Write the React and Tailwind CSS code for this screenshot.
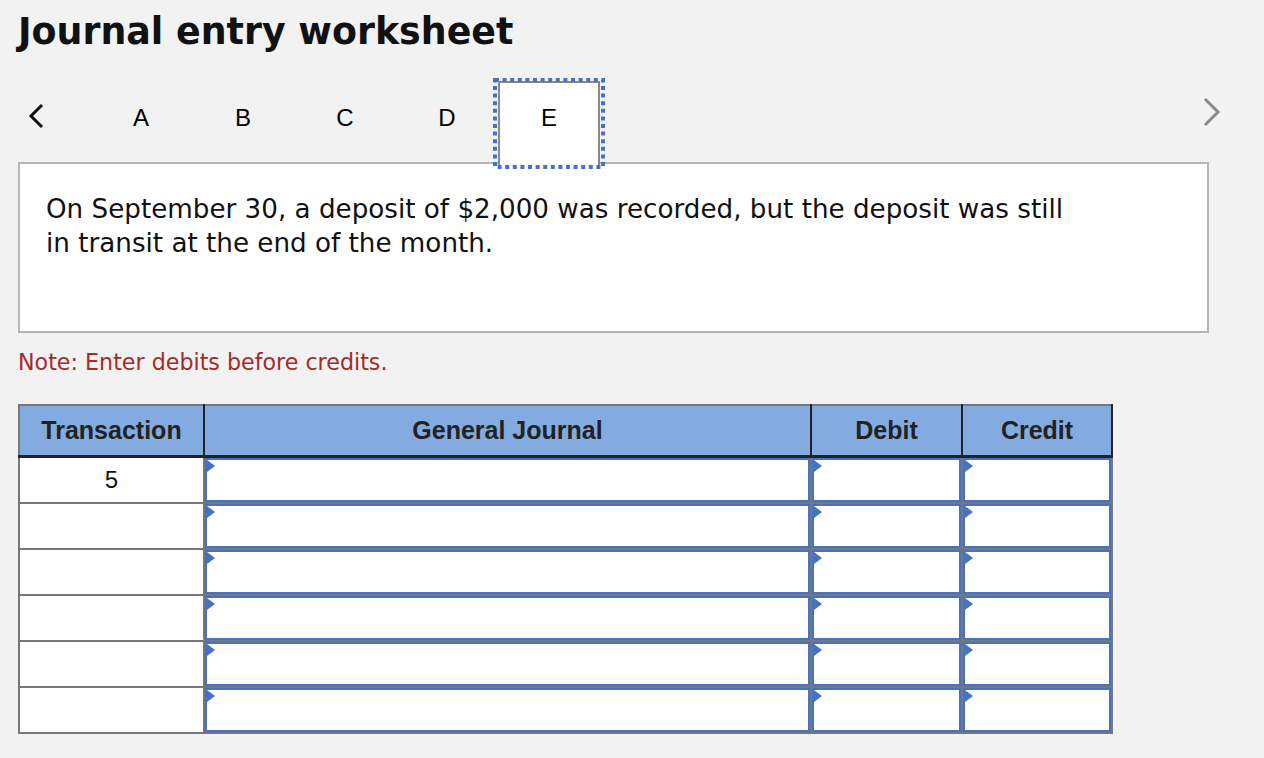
import React from "react";

const tabs = ["A", "B", "C", "D", "E"];

function Triangle() {
  return (
    <span className="absolute left-0 top-0 w-0 h-0 border-y-[6px] border-y-transparent border-l-[8px] border-l-[#4472c4]" />
  );
}

function InputCell() {
  return (
    <td className="p-0 border-2 border-[#777] bg-white h-[46px]">
      <div className="relative h-[44px] border-2 border-[#4472c4] bg-white">
        <Triangle />
      </div>
    </td>
  );
}

export default function App() {
  return (
    <div
      className="min-h-[758px] w-[1264px] bg-[#f2f2f2] text-black overflow-hidden"
      style={{ fontFamily: '"DejaVu Sans", Verdana, sans-serif' }}
    >
      <h1 className="pl-[18px] pt-[14px] text-[36.4px] leading-none font-bold text-[#111]">
        Journal entry worksheet
      </h1>

      <div
        className="mt-[31px] h-[82px] flex items-start pl-[18px]"
        style={{ fontFamily: '"Liberation Sans", Arial, sans-serif' }}
      >
        <div className="w-[72px] h-full flex items-start">
          <svg className="ml-[9px] mt-[21px]" width="18" height="28" viewBox="0 0 18 28">
            <polyline points="15,3 4,14 15,25" fill="none" stroke="#111" strokeWidth="3" strokeLinecap="butt" strokeLinejoin="miter" />
          </svg>
        </div>
        {tabs.map((t) => {
          const sel = t === "E";
          return sel ? (
            <div key={t} className="relative z-10 w-[102px] h-[84px] bg-white border-2 border-b-0 border-[#888] flex justify-center pt-[21px] text-[24px] leading-[28px] text-black">
              {t}
              <svg className="absolute -left-[7px] -top-[5px]" width="112" height="92" viewBox="0 0 112 92">
                <rect x="2" y="2" width="108" height="87" fill="none" stroke="#4472c4" strokeWidth="4" strokeDasharray="4 3.6" />
              </svg>
            </div>
          ) : (
            <div key={t} className="w-[102px] h-full flex justify-center pt-[23px] text-[24px] leading-[28px] text-black">
              {t}
            </div>
          );
        })}
        <div className="ml-auto mr-[41px] mt-[15px]">
          <svg width="22" height="32" viewBox="0 0 22 32">
            <polyline points="4,3 17,16 4,29" fill="none" stroke="#8a8a8a" strokeWidth="3" />
          </svg>
        </div>
      </div>

      <div className="relative -mt-[1px] ml-[18px] w-[1191px] h-[171px] border-2 border-[#b5b5b5] bg-white pl-[26px] pt-[28px] text-[26.2px] leading-[34px] text-[#111]">
        On September 30, a deposit of $2,000 was recorded, but the deposit was still
        <br />
        in transit at the end of the month.
      </div>

      <p className="ml-[18px] mt-[15px] text-[22.2px] leading-[28px] text-[#a52a2a]">
        Note: Enter debits before credits.
      </p>

      <table
        className="ml-[18px] mt-[28px] w-[1093px] table-fixed border-collapse border-2 border-[#777]"
        style={{ fontFamily: '"Liberation Sans", Arial, sans-serif' }}
      >
        <colgroup>
          <col className="w-[185px]" />
          <col className="w-[607px]" />
          <col className="w-[151px]" />
          <col className="w-[150px]" />
        </colgroup>
        <thead>
          <tr>
            {["Transaction", "General Journal", "Debit", "Credit"].map((h, i) => (
              <th
                key={h}
                className={`h-[51px] p-0 bg-[#83abe0] border-2 border-[#222] border-t-[#777] border-b-[3px] text-[25px] font-bold text-[#222] text-center ${i === 0 ? "border-l-[#777]" : ""}`}
              >
                {h}
              </th>
            ))}
          </tr>
        </thead>
        <tbody>
          {[0, 1, 2, 3, 4, 5].map((r) => (
            <tr key={r}>
              <td className="p-0 border-2 border-[#777] bg-white h-[46px] text-center text-[24px] text-[#111]">
                {r === 0 ? "5" : ""}
              </td>
              <InputCell />
              <InputCell />
              <InputCell />
            </tr>
          ))}
        </tbody>
      </table>
    </div>
  );
}
